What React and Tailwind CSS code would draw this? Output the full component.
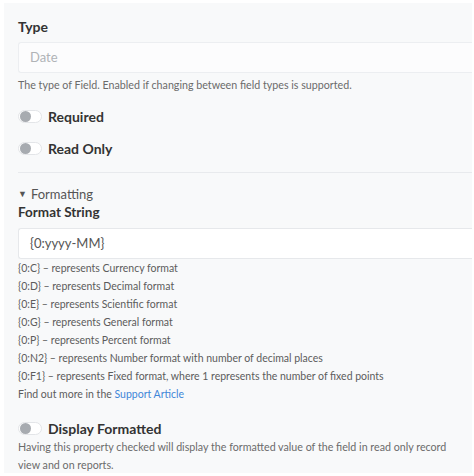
import React from 'react';

const Toggle = () => (
  <span className="relative inline-flex h-[13px] w-[24px] shrink-0 items-center rounded-full border border-[#e3e5e8] bg-white">
    <span className="absolute left-[1px] h-[11px] w-[11px] rounded-full bg-[#a7abb0]" />
  </span>
);

const formats = [
  '{0:C} – represents Currency format',
  '{0:D} – represents Decimal format',
  '{0:E} – represents Scientific format',
  '{0:G} – represents General format',
  '{0:P} – represents Percent format',
  '{0:N2} – represents Number format with number of decimal places',
  '{0:F1} – represents Fixed format, where 1 represents the number of fixed points',
];

export default function App() {
  return (
    <div className="h-[476px] w-[474px] overflow-hidden bg-white pl-[4px] pt-[3px] font-['Lato',sans-serif] text-[#3a3a3a]">
      <div className="h-[470px] w-[468px] bg-[#f8f9fa] pl-[14px]">
        {/* Type */}
        <div className="pt-[15px] text-[14px] font-bold leading-[18px] text-[#333]">Type</div>
        <div className="mt-[6px] flex h-[31px] items-center rounded-l-[3px] border-y border-l border-[#eceef1] bg-[#fcfcfd] pl-[11px] text-[13px] text-[#b0b3b7]">
          Date
        </div>
        <p className="mt-[3px] text-[10.7px] leading-[18px] text-[#6b6b6b]">
          The type of Field. Enabled if changing between field types is supported.
        </p>

        <div className="mt-[13px] flex h-[18px] items-center gap-[6px]">
          <Toggle />
          <span className="text-[14px] font-bold text-[#333]">Required</span>
        </div>
        <div className="mt-[14px] flex h-[18px] items-center gap-[6px]">
          <Toggle />
          <span className="text-[14px] font-bold text-[#333]">Read Only</span>
        </div>

        <div className="mt-[15px] border-t border-[#e8eaed]" />

        {/* Formatting */}
        <div className="mt-[12px] flex items-center gap-[4px] text-[13px] leading-[18px] text-[#555]">
          <span className="text-[9px]">▼</span>
          <span>Formatting</span>
        </div>
        <div className="text-[13.5px] font-bold leading-[18px] text-[#333]">Format String</div>
        <div className="mt-[7px] flex h-[31px] items-center rounded-l-[3px] border-y border-l border-[#e6e8eb] bg-white pl-[11px] text-[13px] text-[#555]">
          {'{0:yyyy-MM}'}
        </div>
        <div className="text-[10.5px] leading-[18px] text-[#5c5c5c]">
          {formats.map((f) => (
            <div key={f}>{f}</div>
          ))}
          <div>
            Find out more in the <span className="text-[#3f86d8]">Support Article</span>
          </div>
        </div>

        <div className="mt-[16px] flex h-[18px] items-center gap-[6px]">
          <Toggle />
          <span className="text-[14px] font-bold text-[#333]">Display Formatted</span>
        </div>
        <p className="mt-[1px] w-[436px] text-[10.7px] leading-[18px] text-[#6b6b6b]">
          Having this property checked will display the formatted value of the field in read only record view and on reports.
        </p>
      </div>
    </div>
  );
}
